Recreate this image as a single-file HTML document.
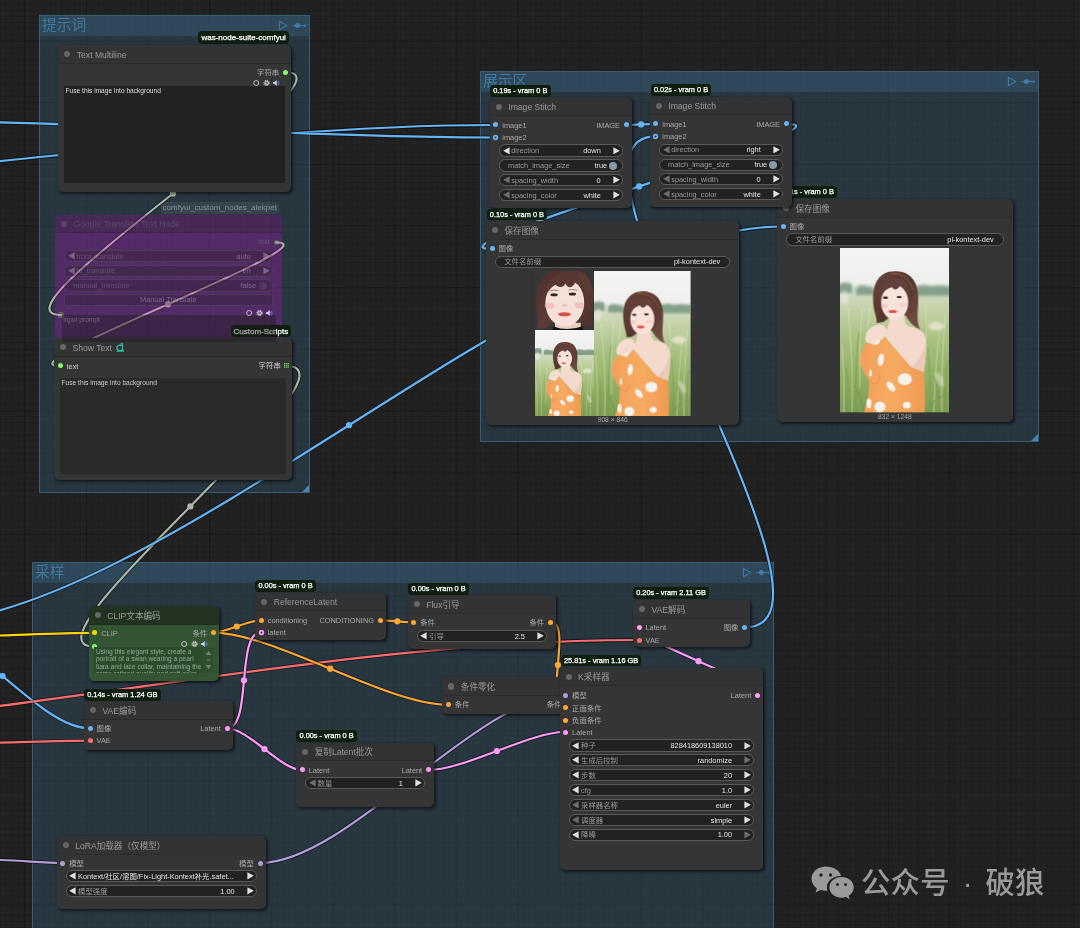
<!DOCTYPE html>
<html lang="zh"><head><meta charset="utf-8"><title>ComfyUI</title>
<style>
*{box-sizing:border-box}
html,body{margin:0;padding:0;background:#202020}
body{width:1080px;height:928px;overflow:hidden;font-family:"Liberation Sans","Noto Sans CJK SC",sans-serif}
#cv{will-change:transform;position:relative;width:1080px;height:928px;overflow:hidden;background-color:#222;
background-image:
 linear-gradient(to right,rgba(0,0,0,.19) 1px,transparent 1px),
 linear-gradient(to bottom,rgba(0,0,0,.19) 1px,transparent 1px),
 linear-gradient(to right,rgba(0,0,0,.115) 1px,transparent 1px),
 linear-gradient(to bottom,rgba(0,0,0,.115) 1px,transparent 1px);
background-size:61.7px 61.7px,61.7px 61.7px,6.17px 6.17px,6.17px 6.17px;
background-position:24.4px 40.6px,24.4px 40.6px,24.4px 40.6px,24.4px 40.6px}
.a{position:absolute}
svg{display:block}
.grp{position:absolute;background:rgba(63,120,158,.25);border:1px solid rgba(63,120,158,.62)}
.grp .hd{position:absolute;left:0;top:0;right:0;height:20.2px;background:rgba(63,120,158,.28)}
.grp .tt{position:absolute;left:2px;top:-1px;font-size:14.8px;line-height:21px;color:rgba(66,126,168,.92);white-space:nowrap}
.nd{position:absolute;background:#353535;border-radius:5px;box-shadow:1.5px 1.5px 3px rgba(0,0,0,.55)}
.nd .th{position:absolute;left:0;top:0;right:0;height:18.5px;background:#333;border-radius:5px 5px 0 0;border-bottom:1px solid #2b2b2b}
.nd .dot{position:absolute;left:6px;top:6.2px;width:6.2px;height:6.2px;border-radius:50%;background:#666}
.nd .tt{position:absolute;left:18.5px;top:.6px;height:18.5px;line-height:18.5px;font-size:8.6px;color:#9a9a9a;white-space:nowrap}
.sl{position:absolute;font-size:7.4px;line-height:10px;height:10px;color:#aaa;white-space:nowrap}
.sd{position:absolute;width:5.2px;height:5.2px;border-radius:50%}
.sh{position:absolute;width:5.6px;height:5.6px;border-radius:50%;background:#2a2a2a;border:1.9px solid}
.wg{position:absolute;height:12.4px;border-radius:6.2px;background:#222;border:1px solid #5a5a5a;font-size:7.4px;line-height:10.6px;white-space:nowrap}
.wg .l{position:absolute;left:11.4px;top:.9px;color:#999}
.wg .l2{position:absolute;left:8.2px;top:.9px;color:#999}
.wg .v{position:absolute;right:21px;top:.9px;color:#e2e2e2}
.wg .v2{position:absolute;right:9px;top:.9px;color:#e2e2e2}
.wg .al{position:absolute;left:2.8px;top:1.4px;fill:#e0e0e0}
.wg .ar{position:absolute;right:2.1px;top:1.4px;fill:#e0e0e0}
.wg .dim{opacity:.4}
.wg .tg{position:absolute;right:4.4px;top:1.4px;width:8.4px;height:8.4px;border-radius:50%;background:#8899aa}
.bdg{position:absolute;height:11.6px;border-radius:3.5px;background:#0f1f0f;color:#fff;font-size:7.4px;line-height:12.2px;padding:0 3.2px;white-space:nowrap;-webkit-text-stroke:.25px #fff}
.ta{position:absolute;background:#222;color:#ddd;font-size:6.6px;line-height:7.4px;padding:.5px 1.6px;overflow:hidden;white-space:nowrap}
.cap{position:absolute;font-size:6.7px;line-height:8px;color:#a8a8a8;text-align:center;white-space:nowrap}
</style></head>
<body><div id="cv">
<div class="grp" style="left:39px;top:15px;width:271px;height:478px"><div class="hd"></div><div class="tt">提示词</div><svg class="a" style="right:2px;top:3.6px" width="32" height="12" viewBox="0 0 32 12"><path d="M4.4 1.2 L11.8 5.5 L4.4 9.8 Z" fill="none" stroke="#3d759e" stroke-width="1.2" stroke-linejoin="round"/><path d="M17.4 5.6 H30" stroke="#417daa" stroke-width="1"/><circle cx="22.4" cy="5.6" r="2.5" fill="#417daa"/><path d="M29 3.9 L31.2 5.6 L29 7.3 Z" fill="#417daa"/></svg><svg class="a" style="right:0;bottom:0" width="7" height="7"><path d="M7 0 V7 H0 Z" fill="rgba(74,143,196,.9)"/></svg></div>
<div class="grp" style="left:480px;top:71px;width:559px;height:371px"><div class="hd"></div><div class="tt">展示区</div><svg class="a" style="right:2px;top:3.6px" width="32" height="12" viewBox="0 0 32 12"><path d="M4.4 1.2 L11.8 5.5 L4.4 9.8 Z" fill="none" stroke="#3d759e" stroke-width="1.2" stroke-linejoin="round"/><path d="M17.4 5.6 H30" stroke="#417daa" stroke-width="1"/><circle cx="22.4" cy="5.6" r="2.5" fill="#417daa"/><path d="M29 3.9 L31.2 5.6 L29 7.3 Z" fill="#417daa"/></svg><svg class="a" style="right:0;bottom:0" width="7" height="7"><path d="M7 0 V7 H0 Z" fill="rgba(74,143,196,.9)"/></svg></div>
<div class="grp" style="left:32px;top:562px;width:742.3px;height:400px"><div class="hd"></div><div class="tt">采样</div><svg class="a" style="right:2px;top:3.6px" width="32" height="12" viewBox="0 0 32 12"><path d="M4.4 1.2 L11.8 5.5 L4.4 9.8 Z" fill="none" stroke="#3d759e" stroke-width="1.2" stroke-linejoin="round"/><path d="M17.4 5.6 H30" stroke="#417daa" stroke-width="1"/><circle cx="22.4" cy="5.6" r="2.5" fill="#417daa"/><path d="M29 3.9 L31.2 5.6 L29 7.3 Z" fill="#417daa"/></svg><svg class="a" style="right:0;bottom:0" width="7" height="7"><path d="M7 0 V7 H0 Z" fill="rgba(74,143,196,.9)"/></svg></div>
<svg class="a" style="left:0;top:0" width="1080" height="928" viewBox="0 0 1080 928" fill="none" stroke-linecap="round"><path d="M285.0 72.0 C367.6 72.0 -21.6 315.0 61.0 315.0" stroke="rgba(0,0,0,.55)" stroke-width="3.8"/><path d="M285.0 72.0 C367.6 72.0 -21.6 315.0 61.0 315.0" stroke="#a9b8a6" stroke-width="2.2"/><path d="M276.0 242.4 C338.2 242.4 -2.2 366.0 60.0 366.0" stroke="rgba(0,0,0,.55)" stroke-width="3.8"/><path d="M276.0 242.4 C338.2 242.4 -2.2 366.0 60.0 366.0" stroke="#a9b8a6" stroke-width="2.2"/><path d="M286.5 366.0 C371.5 366.0 9.3 646.7 94.3 646.7" stroke="rgba(0,0,0,.55)" stroke-width="3.8"/><path d="M286.5 366.0 C371.5 366.0 9.3 646.7 94.3 646.7" stroke="#a9b8a6" stroke-width="2.2"/><path d="M-84.0 624.0 C154.2 624.0 543.8 226.5 782.0 226.5" stroke="rgba(0,0,0,.55)" stroke-width="3.8"/><path d="M-84.0 624.0 C154.2 624.0 543.8 226.5 782.0 226.5" stroke="#64b5f6" stroke-width="2.2"/><path d="M-84.0 624.0 C-33.4 624.0 38.7 728.3 89.3 728.3" stroke="rgba(0,0,0,.55)" stroke-width="3.8"/><path d="M-84.0 624.0 C-33.4 624.0 38.7 728.3 89.3 728.3" stroke="#64b5f6" stroke-width="2.2"/><path d="M-10 162.2 C158.7 145 327.3 125 496 125" stroke="rgba(0,0,0,.55)" stroke-width="3.8"/><path d="M-10 162.2 C158.7 145 327.3 125 496 125" stroke="#64b5f6" stroke-width="2.2"/><path d="M-10 122.2 C158.7 126 327.3 137.5 496 137.5" stroke="rgba(0,0,0,.55)" stroke-width="3.8"/><path d="M-10 122.2 C158.7 126 327.3 137.5 496 137.5" stroke="#64b5f6" stroke-width="2.2"/><path d="M626.3 125.0 C633.7 125.0 648.6 123.8 656.0 123.8" stroke="rgba(0,0,0,.55)" stroke-width="3.8"/><path d="M626.3 125.0 C633.7 125.0 648.6 123.8 656.0 123.8" stroke="#64b5f6" stroke-width="2.2"/><path d="M786.5 123.8 C866.5 123.8 412.0 249.0 492.0 249.0" stroke="rgba(0,0,0,.55)" stroke-width="3.8"/><path d="M786.5 123.8 C866.5 123.8 412.0 249.0 492.0 249.0" stroke="#64b5f6" stroke-width="2.2"/><path d="M745.0 627.2 C869.7 627.2 531.3 136.3 656.0 136.3" stroke="rgba(0,0,0,.55)" stroke-width="3.8"/><path d="M745.0 627.2 C869.7 627.2 531.3 136.3 656.0 136.3" stroke="#64b5f6" stroke-width="2.2"/><path d="M-10 635.8 C30 634.6 60 632.9 94.7 632.9" stroke="rgba(0,0,0,.55)" stroke-width="3.8"/><path d="M-10 635.8 C30 634.6 60 632.9 94.7 632.9" stroke="#ffd500" stroke-width="2.2"/><path d="M-10 742.9 C30 742 60 740.7 89.3 740.7" stroke="rgba(0,0,0,.55)" stroke-width="3.8"/><path d="M-10 742.9 C30 742 60 740.7 89.3 740.7" stroke="#ff6e6e" stroke-width="2.2"/><path d="M-10 707.2 C206.3 679.5 422.7 640 639 640" stroke="rgba(0,0,0,.55)" stroke-width="3.8"/><path d="M-10 707.2 C206.3 679.5 422.7 640 639 640" stroke="#ff6e6e" stroke-width="2.2"/><path d="M212.7 632.7 C225.2 632.7 248.5 620.3 261.0 620.3" stroke="rgba(0,0,0,.55)" stroke-width="3.8"/><path d="M212.7 632.7 C225.2 632.7 248.5 620.3 261.0 620.3" stroke="#ffa931" stroke-width="2.2"/><path d="M212.7 632.7 C274.1 632.7 386.3 704.7 447.7 704.7" stroke="rgba(0,0,0,.55)" stroke-width="3.8"/><path d="M212.7 632.7 C274.1 632.7 386.3 704.7 447.7 704.7" stroke="#ffa931" stroke-width="2.2"/><path d="M381.0 620.3 C389.2 620.3 405.5 622.3 413.7 622.3" stroke="rgba(0,0,0,.55)" stroke-width="3.8"/><path d="M381.0 620.3 C389.2 620.3 405.5 622.3 413.7 622.3" stroke="#ffa931" stroke-width="2.2"/><path d="M551.0 622.3 C572.7 622.3 543.0 708.0 564.7 708.0" stroke="rgba(0,0,0,.55)" stroke-width="3.8"/><path d="M551.0 622.3 C572.7 622.3 543.0 708.0 564.7 708.0" stroke="#ffa931" stroke-width="2.2"/><path d="M227.0 728.3 C252.5 728.3 235.5 632.3 261.0 632.3" stroke="rgba(0,0,0,.55)" stroke-width="3.8"/><path d="M227.0 728.3 C252.5 728.3 235.5 632.3 261.0 632.3" stroke="#ff9cf9" stroke-width="2.2"/><path d="M227.0 728.3 C248.5 728.3 280.5 770.0 302.0 770.0" stroke="rgba(0,0,0,.55)" stroke-width="3.8"/><path d="M227.0 728.3 C248.5 728.3 280.5 770.0 302.0 770.0" stroke="#ff9cf9" stroke-width="2.2"/><path d="M429.0 770.0 C464.2 770.0 529.5 732.0 564.7 732.0" stroke="rgba(0,0,0,.55)" stroke-width="3.8"/><path d="M429.0 770.0 C464.2 770.0 529.5 732.0 564.7 732.0" stroke="#ff9cf9" stroke-width="2.2"/><path d="M758.0 695.2 C792.3 695.2 604.7 627.2 639.0 627.2" stroke="rgba(0,0,0,.55)" stroke-width="3.8"/><path d="M758.0 695.2 C792.3 695.2 604.7 627.2 639.0 627.2" stroke="#ff9cf9" stroke-width="2.2"/><path d="M-10 859.8 C20 860 40 863 62.3 863" stroke="rgba(0,0,0,.55)" stroke-width="3.8"/><path d="M-10 859.8 C20 860 40 863 62.3 863" stroke="#b39ddb" stroke-width="2.2"/><path d="M260.0 863.0 C347.0 863.0 477.7 695.2 564.7 695.2" stroke="rgba(0,0,0,.55)" stroke-width="3.8"/><path d="M260.0 863.0 C347.0 863.0 477.7 695.2 564.7 695.2" stroke="#b39ddb" stroke-width="2.2"/><circle cx="173.0" cy="193.5" r="3.1" fill="#a9b8a6" stroke="none"/><circle cx="168.0" cy="304.2" r="3.1" fill="#a9b8a6" stroke="none"/><circle cx="190.4" cy="506.4" r="3.1" fill="#a9b8a6" stroke="none"/><circle cx="349.0" cy="425.2" r="3.1" fill="#64b5f6" stroke="none"/><circle cx="2.6" cy="676.1" r="3.1" fill="#64b5f6" stroke="none"/><circle cx="641.1" cy="124.4" r="3.1" fill="#64b5f6" stroke="none"/><circle cx="639.2" cy="186.4" r="3.1" fill="#64b5f6" stroke="none"/><circle cx="700.5" cy="381.8" r="3.1" fill="#64b5f6" stroke="none"/><circle cx="236.8" cy="626.5" r="3.1" fill="#ffa931" stroke="none"/><circle cx="330.2" cy="668.7" r="3.1" fill="#ffa931" stroke="none"/><circle cx="397.3" cy="621.3" r="3.1" fill="#ffa931" stroke="none"/><circle cx="557.9" cy="665.1" r="3.1" fill="#ffa931" stroke="none"/><circle cx="244.0" cy="680.3" r="3.1" fill="#ff9cf9" stroke="none"/><circle cx="264.5" cy="749.1" r="3.1" fill="#ff9cf9" stroke="none"/><circle cx="496.9" cy="751.0" r="3.1" fill="#ff9cf9" stroke="none"/><circle cx="698.5" cy="661.2" r="3.1" fill="#ff9cf9" stroke="none"/><circle cx="412.4" cy="779.1" r="3.1" fill="#b39ddb" stroke="none"/></svg>
<div class="bdg" style="left:198px;top:31.4px;width:91.3px;font-size:8px;height:12.2px;line-height:13.6px;text-align:center;padding:0;border-radius:4px">was-node-suite-comfyui</div>
<div class="nd" style="left:58.3px;top:45px;width:232.7px;height:146.7px;background:#353535;"><div class="th" style="background:#333;border-bottom-color:#2b2b2b"></div><div class="dot" style="background:#666"></div><div class="tt" style="color:#9a9a9a">Text Multiline</div>
<svg class="a" style="right:2.0px;top:23.5px" width="7" height="7"><circle cx="3.5" cy="3.5" r="2.5" fill="#7fff6a"/></svg>
<div class="sl" style="right:11.8px;top:22.8px;color:#aaa">字符串</div>
<div class="a" style="left:195.0px;top:34px"><svg width="27" height="8" viewBox="0 0 27 8"><circle cx="3.2" cy="4" r="2.5" fill="none" stroke="#e6e6e6" stroke-width=".75"/><circle cx="13.6" cy="4" r="2.75" fill="none" stroke="#e4e4e4" stroke-width=".9" stroke-dasharray="1.15 1.01"/><circle cx="13.6" cy="4" r="1.75" fill="none" stroke="#ececec" stroke-width="1"/><circle cx="13.6" cy="4" r=".55" fill="#ececec"/><path d="M20.2 2.9 H21.6 L23.7 1 V7 L21.6 5.1 H20.2 Z" fill="#d9d2e8"/><path d="M24.5 2.6 Q25.5 4 24.5 5.4 M25.4 1.7 Q27 4 25.4 6.3" stroke="#4f86e8" stroke-width=".8" fill="none"/></svg></div>
<div class="ta" style="left:5.7px;top:41px;width:221px;height:96.7px">Fuse this image into background</div>
</div>
<div class="a" style="left:0;top:0">
<div class="bdg" style="left:160.5px;top:202.2px;width:118.5px;font-size:8px;height:11.6px;line-height:12.8px;text-align:center;padding:0;border-radius:4px;background:rgba(255,255,255,.065);color:#84949f;-webkit-text-stroke:0">comfyui_custom_nodes_alekpet</div>
</div>
<div class="nd" style="left:55px;top:214.5px;width:226.7px;height:131px;background:rgba(255,0,255,.2);box-shadow:none"><div class="th" style="background:rgba(40,30,40,.25);border-bottom-color:rgba(0,0,0,.12)"></div><div class="a" style="left:0;top:0;right:0;bottom:0;opacity:.3">
<div class="dot" style="background:#888"></div><div class="tt" style="color:#8f8f8f">Google Translate Text Node</div>
<div class="sd" style="right:3px;top:25.3px;background:#7fff6a"></div><div class="sl" style="right:11.9px;top:22.7px">text</div>
<div class="wg" style="left:9px;right:9px;top:35.3px"><svg class="al" width="7" height="7.6" viewBox="0 0 7 7.6"><path d="M6.6 .2 V7.4 L.2 3.8 Z"/></svg><span class="l">from_translate</span><span class="v">auto</span><svg class="ar" width="7" height="7.6" viewBox="0 0 7 7.6"><path d="M.4 .2 V7.4 L6.8 3.8 Z"/></svg></div>
<div class="wg" style="left:9px;right:9px;top:50.0px"><svg class="al" width="7" height="7.6" viewBox="0 0 7 7.6"><path d="M6.6 .2 V7.4 L.2 3.8 Z"/></svg><span class="l">to_translate</span><span class="v">en</span><svg class="ar" width="7" height="7.6" viewBox="0 0 7 7.6"><path d="M.4 .2 V7.4 L6.8 3.8 Z"/></svg></div>
<div class="wg" style="left:9px;right:9px;top:64.8px"><span class="l2">manual_translate</span><span class="v" style="right:15.5px">false</span><i class="tg" style="background:#555"></i></div>
<div class="wg" style="left:9px;right:9px;top:79.6px;border-radius:1px;text-align:center;color:#ddd">Manual Translate</div>
<div class="sd" style="left:3.4px;top:97.9px;background:#7fff6a"></div>
</div></div>
<div class="bdg" style="left:231px;top:324.8px;width:59.7px;font-size:8px;height:12.2px;line-height:13.6px;text-align:center;padding:0;border-radius:4px">Custom-Scripts</div>
<div class="nd" style="left:54px;top:338.1px;width:238.4px;height:141.9px;background:#353535;"><div class="th" style="background:#333;border-bottom-color:#2b2b2b"></div><div class="dot" style="background:#666"></div><div class="tt" style="color:#9a9a9a">Show Text <svg style="display:inline;vertical-align:-1.3px;margin-left:.6px" width="9" height="9" viewBox="0 0 10 10"><path d="M7.2 3.2 A3 3 0 1 0 7.2 7.6 L9.4 9.2 M2.2 9 H8.6 M8.4 8.6 V1 H6.4" fill="none" stroke="#2fc0a0" stroke-width="1.3" stroke-linecap="round" stroke-linejoin="round"/></svg></div>
<svg class="a" style="left:2.5px;top:24.4px" width="7" height="7"><circle cx="3.5" cy="3.5" r="2.5" fill="#7fff6a"/></svg>
<div class="sl" style="left:12.5px;top:23.7px;color:#ccc">text</div>
<div class="sl" style="right:11.6px;top:23.2px;color:#ccc">字符串</div>
<svg class="a" style="right:3px;top:24.6px" width="5.6" height="5.6" viewBox="0 0 8 8"><g fill="#6bdc5a"><rect x="0" y="0" width="2" height="2"/><rect x="3" y="0" width="2" height="2"/><rect x="6" y="0" width="2" height="2"/><rect x="0" y="3" width="2" height="2"/><rect x="3" y="3" width="2" height="2"/><rect x="6" y="3" width="2" height="2"/><rect x="0" y="6" width="2" height="2"/><rect x="3" y="6" width="2" height="2"/><rect x="6" y="6" width="2" height="2"/></g></svg>
<div class="ta" style="left:6px;top:40.4px;width:226px;height:95.8px;background:#2a2a2a;color:#ccc">Fuse this image into background</div>
</div>
<div class="ta" style="left:61.6px;top:315px;width:214.1px;height:26.8px;background:rgba(28,28,28,.42);color:rgba(205,195,210,.4)">input prompt</div>
<div class="a" style="left:245.6px;top:309px"><svg width="27" height="8" viewBox="0 0 27 8"><circle cx="3.2" cy="4" r="2.5" fill="none" stroke="#e6e6e6" stroke-width=".75"/><circle cx="13.6" cy="4" r="2.75" fill="none" stroke="#e4e4e4" stroke-width=".9" stroke-dasharray="1.15 1.01"/><circle cx="13.6" cy="4" r="1.75" fill="none" stroke="#ececec" stroke-width="1"/><circle cx="13.6" cy="4" r=".55" fill="#ececec"/><path d="M20.2 2.9 H21.6 L23.7 1 V7 L21.6 5.1 H20.2 Z" fill="#d9d2e8"/><path d="M24.5 2.6 Q25.5 4 24.5 5.4 M25.4 1.7 Q27 4 25.4 6.3" stroke="#4f86e8" stroke-width=".8" fill="none"/></svg></div>
<div class="bdg" style="left:777px;top:186.4px;">0.11s - vram 0 B</div>
<div class="nd" style="left:777px;top:199px;width:235.7px;height:223px;background:#353535;"><div class="th" style="background:#333;border-bottom-color:#2b2b2b"></div><div class="dot" style="background:#666"></div><div class="tt" style="color:#9a9a9a">保存图像</div>
<svg class="a" style="left:2.5px;top:24.0px" width="7" height="7"><circle cx="3.5" cy="3.5" r="2.5" fill="#64b5f6"/></svg>
<div class="sl" style="left:12.5px;top:23.3px;color:#aaa">图像</div>
<div class="wg" style="left:9px;right:9px;top:34.3px"><span class="l2">文件名前缀</span><span class="v2">pl-kontext-dev</span></div>
<svg class="a" style="left:63px;top:49.400000000000006px" width="109.3" height="164.3" viewBox="0 0 548 824" preserveAspectRatio="none">
<defs><linearGradient id="gr4" x1="0" y1="0" x2="0" y2="1"><stop offset="0" stop-color="#f4f4f3"/><stop offset=".21" stop-color="#eff0ee"/><stop offset=".27" stop-color="#d3dbc9"/><stop offset=".34" stop-color="#c9d5ae"/><stop offset=".55" stop-color="#a9c182"/><stop offset=".8" stop-color="#8fae62"/><stop offset="1" stop-color="#7d9c54"/></linearGradient>
<linearGradient id="hr4" x1="0" y1="0" x2="1" y2="1"><stop offset="0" stop-color="#6a443a"/><stop offset=".5" stop-color="#55362f"/><stop offset="1" stop-color="#7a5246"/></linearGradient>
<linearGradient id="dr4" x1="0" y1="0" x2="1" y2="0"><stop offset="0" stop-color="#f2a05a"/><stop offset=".5" stop-color="#f7ab62"/><stop offset="1" stop-color="#f09a52"/></linearGradient>
<filter id="bl4" x="-10%" y="-10%" width="120%" height="120%"><feGaussianBlur stdDeviation="7"/></filter><filter id="bs4"><feGaussianBlur stdDeviation="2.5"/></filter></defs>
<rect width="548" height="824" fill="url(#gr4)"/>
<g filter="url(#bl4)"><path d="M-10 182 Q25 166 58 180 Q64 200 60 226 L-10 230 Z M80 200 Q110 178 136 194 Q162 186 172 214 L172 236 L80 236 Z M370 198 Q410 176 452 192 Q500 184 560 194 L560 240 L370 240 Z" fill="#76947c" opacity=".85"/>
<ellipse cx="482" cy="392" rx="40" ry="22" fill="#ece9d6" opacity=".8"/><ellipse cx="22" cy="250" rx="22" ry="34" fill="#e8eadb" opacity=".7"/><ellipse cx="500" cy="660" rx="16" ry="40" fill="#dfe0c4" opacity=".6" transform="rotate(-25 500 660)"/></g>
<g filter="url(#bs4)" fill="none"><g stroke="#e2e9d2" stroke-width="5" opacity=".55"><path d="M60 824 Q70 600 40 300"/><path d="M470 824 Q480 560 500 400"/><path d="M510 824 Q505 600 530 330"/><path d="M20 824 Q25 650 10 480"/><path d="M100 700 Q95 500 110 300"/><path d="M140 560 Q130 420 150 300"/><path d="M430 500 Q440 400 425 300"/></g>
<g stroke="#6f9548" stroke-width="6" opacity=".5"><path d="M80 824 Q75 600 95 420"/><path d="M450 824 Q455 650 440 500"/><path d="M530 824 Q520 700 540 560"/><path d="M35 824 Q45 700 30 600"/><path d="M490 824 Q500 720 470 640"/><path d="M118 824 Q110 740 70 690"/><path d="M420 824 Q470 760 540 730"/></g></g>
<path d="M280 116 C190 112 160 190 166 270 C168 320 190 360 182 374 C215 380 240 360 250 340 L330 340 C350 380 380 400 402 410 C380 360 392 320 392 262 C396 180 360 116 280 116 Z" fill="url(#hr4)"/>
<path d="M240 388 C250 370 250 350 248 330 L322 330 C322 360 326 380 340 392 C380 400 420 410 428 450 C436 500 430 560 420 626 L356 600 L225 445 Z" fill="#f3dacd"/>
<path d="M356 600 L420 626 C428 570 432 520 430 470 C420 520 400 560 356 600 Z" fill="#e6c3b2" opacity=".7"/>
<ellipse cx="274" cy="272" rx="68" ry="88" fill="#f7e3da"/>
<path d="M204 250 C196 180 240 150 290 152 C340 154 356 200 348 250 C340 215 320 196 300 190 C290 210 270 214 262 196 C240 200 215 215 204 250 Z" fill="#63413a"/>
<path d="M250 130 C300 120 350 150 366 210" stroke="#8a5a48" stroke-width="10" fill="none" opacity=".55" filter="url(#bs4)"/>
<ellipse cx="228" cy="249" rx="13" ry="6" fill="#3a2624"/><ellipse cx="297" cy="246" rx="13" ry="6" fill="#3a2624"/>
<ellipse cx="265" cy="318" rx="21" ry="8" fill="#e2504a"/>
<ellipse cx="222" cy="290" rx="16" ry="11" fill="#f3c2b8" opacity=".6"/><ellipse cx="314" cy="286" rx="16" ry="11" fill="#f3c2b8" opacity=".6"/>
<path d="M220 443 L356 598 L420 623 C428 690 426 760 425 824 L120 824 C135 770 150 720 145 660 C120 630 100 590 100 558 C104 530 112 505 122 486 L166 462 Z" fill="url(#dr4)"/>
<path d="M145 660 C170 690 190 690 200 650" stroke="#e08a44" stroke-width="6" fill="none" opacity=".6" filter="url(#bs4)"/>
<path d="M128 470 C120 430 150 390 190 384 C220 380 236 400 232 424 C228 450 200 470 170 486 Z" fill="#f4dccf"/>
<g fill="#f6f2ec"><ellipse cx="205" cy="560" rx="15" ry="32" transform="rotate(8 205 560)"/><ellipse cx="325" cy="658" rx="35" ry="30"/><ellipse cx="255" cy="695" rx="16" ry="30" transform="rotate(-38 255 695)"/><ellipse cx="200" cy="797" rx="28" ry="27"/><ellipse cx="145" cy="780" rx="12" ry="25"/><ellipse cx="335" cy="788" rx="20" ry="17"/><ellipse cx="186" cy="474" rx="15" ry="9" transform="rotate(-40 186 474)"/><ellipse cx="153" cy="628" rx="6" ry="19"/></g>
</svg>
<div class="cap" style="left:0;right:0;top:213.8px">832 × 1248</div>
</div>
<div class="bdg" style="left:490px;top:85.3px;">0.19s - vram 0 B</div>
<div class="nd" style="left:489.8px;top:97.6px;width:142px;height:110.2px;background:#353535;"><div class="th" style="background:#333;border-bottom-color:#2b2b2b"></div><div class="dot" style="background:#666"></div><div class="tt" style="color:#9a9a9a">Image Stitch</div>
<svg class="a" style="left:2.5px;top:23.9px" width="7" height="7"><circle cx="3.5" cy="3.5" r="2.5" fill="#64b5f6"/></svg>
<div class="sl" style="left:12.5px;top:23.2px;color:#aaa">image1</div>
<svg class="a" style="left:2.5px;top:36.6px" width="7" height="7"><circle cx="3.5" cy="3.5" r="1.85" fill="none" stroke="#64b5f6" stroke-width="1.7"/></svg>
<div class="sl" style="left:12.5px;top:35.9px;color:#aaa">image2</div>
<svg class="a" style="right:2.0px;top:23.9px" width="7" height="7"><circle cx="3.5" cy="3.5" r="2.5" fill="#64b5f6"/></svg>
<div class="sl" style="right:11.8px;top:23.2px;color:#aaa">IMAGE</div>
<div class="wg" style="left:9px;right:9px;top:46.9px"><svg class="al" width="7" height="7.6" viewBox="0 0 7 7.6"><path d="M6.6 .2 V7.4 L.2 3.8 Z"/></svg><span class="l">direction</span><span class="v" style="right:21px">down</span><svg class="ar" width="7" height="7.6" viewBox="0 0 7 7.6"><path d="M.4 .2 V7.4 L6.8 3.8 Z"/></svg></div>
<div class="wg" style="left:9px;right:9px;top:61.9px"><span class="l2">match_image_size</span><span class="v" style="right:14.6px">true</span><i class="tg"></i></div>
<div class="wg" style="left:9px;right:9px;top:76.5px"><svg class="al dim" width="7" height="7.6" viewBox="0 0 7 7.6"><path d="M6.6 .2 V7.4 L.2 3.8 Z"/></svg><span class="l">spacing_width</span><span class="v" style="right:21.3px">0</span><svg class="ar" width="7" height="7.6" viewBox="0 0 7 7.6"><path d="M.4 .2 V7.4 L6.8 3.8 Z"/></svg></div>
<div class="wg" style="left:9px;right:9px;top:91.2px"><svg class="al dim" width="7" height="7.6" viewBox="0 0 7 7.6"><path d="M6.6 .2 V7.4 L.2 3.8 Z"/></svg><span class="l">spacing_color</span><span class="v" style="right:21px">white</span><svg class="ar" width="7" height="7.6" viewBox="0 0 7 7.6"><path d="M.4 .2 V7.4 L6.8 3.8 Z"/></svg></div>
</div>
<div class="bdg" style="left:650.7px;top:84.4px;">0.02s - vram 0 B</div>
<div class="nd" style="left:649.8px;top:96.5px;width:142px;height:110.8px;background:#353535;"><div class="th" style="background:#333;border-bottom-color:#2b2b2b"></div><div class="dot" style="background:#666"></div><div class="tt" style="color:#9a9a9a">Image Stitch</div>
<svg class="a" style="left:2.5px;top:23.8px" width="7" height="7"><circle cx="3.5" cy="3.5" r="2.5" fill="#64b5f6"/></svg>
<div class="sl" style="left:12.5px;top:23.1px;color:#aaa">image1</div>
<svg class="a" style="left:2.5px;top:36.3px" width="7" height="7"><circle cx="3.5" cy="3.5" r="1.85" fill="none" stroke="#64b5f6" stroke-width="1.7"/></svg>
<div class="sl" style="left:12.5px;top:35.6px;color:#aaa">image2</div>
<svg class="a" style="right:2.0px;top:23.8px" width="7" height="7"><circle cx="3.5" cy="3.5" r="2.5" fill="#64b5f6"/></svg>
<div class="sl" style="right:11.8px;top:23.1px;color:#aaa">IMAGE</div>
<div class="wg" style="left:9px;right:9px;top:47.0px"><svg class="al dim" width="7" height="7.6" viewBox="0 0 7 7.6"><path d="M6.6 .2 V7.4 L.2 3.8 Z"/></svg><span class="l">direction</span><span class="v" style="right:21px">right</span><svg class="ar" width="7" height="7.6" viewBox="0 0 7 7.6"><path d="M.4 .2 V7.4 L6.8 3.8 Z"/></svg></div>
<div class="wg" style="left:9px;right:9px;top:62.0px"><span class="l2">match_image_size</span><span class="v" style="right:14.6px">true</span><i class="tg"></i></div>
<div class="wg" style="left:9px;right:9px;top:76.6px"><svg class="al dim" width="7" height="7.6" viewBox="0 0 7 7.6"><path d="M6.6 .2 V7.4 L.2 3.8 Z"/></svg><span class="l">spacing_width</span><span class="v" style="right:21.3px">0</span><svg class="ar" width="7" height="7.6" viewBox="0 0 7 7.6"><path d="M.4 .2 V7.4 L6.8 3.8 Z"/></svg></div>
<div class="wg" style="left:9px;right:9px;top:91.6px"><svg class="al dim" width="7" height="7.6" viewBox="0 0 7 7.6"><path d="M6.6 .2 V7.4 L.2 3.8 Z"/></svg><span class="l">spacing_color</span><span class="v" style="right:21px">white</span><svg class="ar" width="7" height="7.6" viewBox="0 0 7 7.6"><path d="M.4 .2 V7.4 L6.8 3.8 Z"/></svg></div>
</div>
<div class="bdg" style="left:486.6px;top:208.6px;">0.10s - vram 0 B</div>
<div class="nd" style="left:486px;top:221px;width:253.3px;height:204px;background:#353535;"><div class="th" style="background:#333;border-bottom-color:#2b2b2b"></div><div class="dot" style="background:#666"></div><div class="tt" style="color:#9a9a9a">保存图像</div>
<svg class="a" style="left:2.5px;top:24.0px" width="7" height="7"><circle cx="3.5" cy="3.5" r="2.5" fill="#64b5f6"/></svg>
<div class="sl" style="left:12.5px;top:23.3px;color:#aaa">图像</div>
<div class="wg" style="left:9px;right:9px;top:34.6px"><span class="l2">文件名前缀</span><span class="v2">pl-kontext-dev</span></div>
<svg class="a" style="left:49.200000000000045px;top:49.80000000000001px" width="58.9" height="59" viewBox="0 0 340 342" preserveAspectRatio="none">
<defs><filter id="fb1"><feGaussianBlur stdDeviation="4"/></filter><linearGradient id="fh1" x1="0" y1="0" x2="1" y2="1"><stop offset="0" stop-color="#4a2f2b"/><stop offset=".5" stop-color="#5e3c35"/><stop offset="1" stop-color="#4c312c"/></linearGradient></defs>
<rect width="340" height="342" fill="#373737"/>
<path d="M84 0 C30 30 2 110 6 200 C10 260 28 300 14 332 C50 338 92 322 106 290 L248 290 C262 318 300 326 334 314 C322 270 338 220 338 170 C340 90 312 24 262 0 Z" fill="url(#fh1)"/>
<path d="M116 300 L116 342 L264 342 L264 300 Z" fill="#eacdc1"/>
<path d="M106 322 Q190 352 274 320 L280 342 L100 342 Z" fill="#141414"/>
<ellipse cx="172" cy="182" rx="112" ry="140" fill="#f5e0d8"/>
<path d="M58 170 C48 70 90 22 170 20 C260 18 302 72 292 168 C282 112 258 82 232 68 C216 100 190 104 176 72 C160 104 130 94 120 80 C90 94 66 124 58 170 Z" fill="#583832"/>
<ellipse cx="110" cy="138" rx="21" ry="9" fill="#3a2422"/><ellipse cx="216" cy="133" rx="21" ry="9" fill="#3a2422"/>
<path d="M84 116 Q110 106 134 114 M194 110 Q218 102 244 112" stroke="#6a4a40" stroke-width="5" fill="none" opacity=".7"/>
<ellipse cx="170" cy="198" rx="15" ry="9" fill="#ebc6ba"/>
<ellipse cx="170" cy="251" rx="37" ry="12" fill="#d9504c"/>
<g filter="url(#fb1)"><ellipse cx="84" cy="202" rx="28" ry="18" fill="#f2b8b0" opacity=".7"/><ellipse cx="256" cy="198" rx="28" ry="18" fill="#f2b8b0" opacity=".7"/></g>
</svg><svg class="a" style="left:48.700000000000045px;top:108.89999999999998px" width="59.4" height="86.1" viewBox="0 0 548 824" preserveAspectRatio="none">
<defs><linearGradient id="gr2" x1="0" y1="0" x2="0" y2="1"><stop offset="0" stop-color="#f4f4f3"/><stop offset=".21" stop-color="#eff0ee"/><stop offset=".27" stop-color="#d3dbc9"/><stop offset=".34" stop-color="#c9d5ae"/><stop offset=".55" stop-color="#a9c182"/><stop offset=".8" stop-color="#8fae62"/><stop offset="1" stop-color="#7d9c54"/></linearGradient>
<linearGradient id="hr2" x1="0" y1="0" x2="1" y2="1"><stop offset="0" stop-color="#6a443a"/><stop offset=".5" stop-color="#55362f"/><stop offset="1" stop-color="#7a5246"/></linearGradient>
<linearGradient id="dr2" x1="0" y1="0" x2="1" y2="0"><stop offset="0" stop-color="#f2a05a"/><stop offset=".5" stop-color="#f7ab62"/><stop offset="1" stop-color="#f09a52"/></linearGradient>
<filter id="bl2" x="-10%" y="-10%" width="120%" height="120%"><feGaussianBlur stdDeviation="7"/></filter><filter id="bs2"><feGaussianBlur stdDeviation="2.5"/></filter></defs>
<rect width="548" height="824" fill="url(#gr2)"/>
<g filter="url(#bl2)"><path d="M-10 182 Q25 166 58 180 Q64 200 60 226 L-10 230 Z M80 200 Q110 178 136 194 Q162 186 172 214 L172 236 L80 236 Z M370 198 Q410 176 452 192 Q500 184 560 194 L560 240 L370 240 Z" fill="#76947c" opacity=".85"/>
<ellipse cx="482" cy="392" rx="40" ry="22" fill="#ece9d6" opacity=".8"/><ellipse cx="22" cy="250" rx="22" ry="34" fill="#e8eadb" opacity=".7"/><ellipse cx="500" cy="660" rx="16" ry="40" fill="#dfe0c4" opacity=".6" transform="rotate(-25 500 660)"/></g>
<g filter="url(#bs2)" fill="none"><g stroke="#e2e9d2" stroke-width="5" opacity=".55"><path d="M60 824 Q70 600 40 300"/><path d="M470 824 Q480 560 500 400"/><path d="M510 824 Q505 600 530 330"/><path d="M20 824 Q25 650 10 480"/><path d="M100 700 Q95 500 110 300"/><path d="M140 560 Q130 420 150 300"/><path d="M430 500 Q440 400 425 300"/></g>
<g stroke="#6f9548" stroke-width="6" opacity=".5"><path d="M80 824 Q75 600 95 420"/><path d="M450 824 Q455 650 440 500"/><path d="M530 824 Q520 700 540 560"/><path d="M35 824 Q45 700 30 600"/><path d="M490 824 Q500 720 470 640"/><path d="M118 824 Q110 740 70 690"/><path d="M420 824 Q470 760 540 730"/></g></g>
<path d="M280 116 C190 112 160 190 166 270 C168 320 190 360 182 374 C215 380 240 360 250 340 L330 340 C350 380 380 400 402 410 C380 360 392 320 392 262 C396 180 360 116 280 116 Z" fill="url(#hr2)"/>
<path d="M240 388 C250 370 250 350 248 330 L322 330 C322 360 326 380 340 392 C380 400 420 410 428 450 C436 500 430 560 420 626 L356 600 L225 445 Z" fill="#f3dacd"/>
<path d="M356 600 L420 626 C428 570 432 520 430 470 C420 520 400 560 356 600 Z" fill="#e6c3b2" opacity=".7"/>
<ellipse cx="274" cy="272" rx="68" ry="88" fill="#f7e3da"/>
<path d="M204 250 C196 180 240 150 290 152 C340 154 356 200 348 250 C340 215 320 196 300 190 C290 210 270 214 262 196 C240 200 215 215 204 250 Z" fill="#63413a"/>
<path d="M250 130 C300 120 350 150 366 210" stroke="#8a5a48" stroke-width="10" fill="none" opacity=".55" filter="url(#bs2)"/>
<ellipse cx="228" cy="249" rx="13" ry="6" fill="#3a2624"/><ellipse cx="297" cy="246" rx="13" ry="6" fill="#3a2624"/>
<ellipse cx="265" cy="318" rx="21" ry="8" fill="#e2504a"/>
<ellipse cx="222" cy="290" rx="16" ry="11" fill="#f3c2b8" opacity=".6"/><ellipse cx="314" cy="286" rx="16" ry="11" fill="#f3c2b8" opacity=".6"/>
<path d="M220 443 L356 598 L420 623 C428 690 426 760 425 824 L120 824 C135 770 150 720 145 660 C120 630 100 590 100 558 C104 530 112 505 122 486 L166 462 Z" fill="url(#dr2)"/>
<path d="M145 660 C170 690 190 690 200 650" stroke="#e08a44" stroke-width="6" fill="none" opacity=".6" filter="url(#bs2)"/>
<path d="M128 470 C120 430 150 390 190 384 C220 380 236 400 232 424 C228 450 200 470 170 486 Z" fill="#f4dccf"/>
<g fill="#f6f2ec"><ellipse cx="205" cy="560" rx="15" ry="32" transform="rotate(8 205 560)"/><ellipse cx="325" cy="658" rx="35" ry="30"/><ellipse cx="255" cy="695" rx="16" ry="30" transform="rotate(-38 255 695)"/><ellipse cx="200" cy="797" rx="28" ry="27"/><ellipse cx="145" cy="780" rx="12" ry="25"/><ellipse cx="335" cy="788" rx="20" ry="17"/><ellipse cx="186" cy="474" rx="15" ry="9" transform="rotate(-40 186 474)"/><ellipse cx="153" cy="628" rx="6" ry="19"/></g>
</svg><svg class="a" style="left:108.10000000000002px;top:49.80000000000001px" width="96.6" height="145.2" viewBox="0 0 548 824" preserveAspectRatio="none">
<defs><linearGradient id="gr3" x1="0" y1="0" x2="0" y2="1"><stop offset="0" stop-color="#f4f4f3"/><stop offset=".21" stop-color="#eff0ee"/><stop offset=".27" stop-color="#d3dbc9"/><stop offset=".34" stop-color="#c9d5ae"/><stop offset=".55" stop-color="#a9c182"/><stop offset=".8" stop-color="#8fae62"/><stop offset="1" stop-color="#7d9c54"/></linearGradient>
<linearGradient id="hr3" x1="0" y1="0" x2="1" y2="1"><stop offset="0" stop-color="#6a443a"/><stop offset=".5" stop-color="#55362f"/><stop offset="1" stop-color="#7a5246"/></linearGradient>
<linearGradient id="dr3" x1="0" y1="0" x2="1" y2="0"><stop offset="0" stop-color="#f2a05a"/><stop offset=".5" stop-color="#f7ab62"/><stop offset="1" stop-color="#f09a52"/></linearGradient>
<filter id="bl3" x="-10%" y="-10%" width="120%" height="120%"><feGaussianBlur stdDeviation="7"/></filter><filter id="bs3"><feGaussianBlur stdDeviation="2.5"/></filter></defs>
<rect width="548" height="824" fill="url(#gr3)"/>
<g filter="url(#bl3)"><path d="M-10 182 Q25 166 58 180 Q64 200 60 226 L-10 230 Z M80 200 Q110 178 136 194 Q162 186 172 214 L172 236 L80 236 Z M370 198 Q410 176 452 192 Q500 184 560 194 L560 240 L370 240 Z" fill="#76947c" opacity=".85"/>
<ellipse cx="482" cy="392" rx="40" ry="22" fill="#ece9d6" opacity=".8"/><ellipse cx="22" cy="250" rx="22" ry="34" fill="#e8eadb" opacity=".7"/><ellipse cx="500" cy="660" rx="16" ry="40" fill="#dfe0c4" opacity=".6" transform="rotate(-25 500 660)"/></g>
<g filter="url(#bs3)" fill="none"><g stroke="#e2e9d2" stroke-width="5" opacity=".55"><path d="M60 824 Q70 600 40 300"/><path d="M470 824 Q480 560 500 400"/><path d="M510 824 Q505 600 530 330"/><path d="M20 824 Q25 650 10 480"/><path d="M100 700 Q95 500 110 300"/><path d="M140 560 Q130 420 150 300"/><path d="M430 500 Q440 400 425 300"/></g>
<g stroke="#6f9548" stroke-width="6" opacity=".5"><path d="M80 824 Q75 600 95 420"/><path d="M450 824 Q455 650 440 500"/><path d="M530 824 Q520 700 540 560"/><path d="M35 824 Q45 700 30 600"/><path d="M490 824 Q500 720 470 640"/><path d="M118 824 Q110 740 70 690"/><path d="M420 824 Q470 760 540 730"/></g></g>
<path d="M280 116 C190 112 160 190 166 270 C168 320 190 360 182 374 C215 380 240 360 250 340 L330 340 C350 380 380 400 402 410 C380 360 392 320 392 262 C396 180 360 116 280 116 Z" fill="url(#hr3)"/>
<path d="M240 388 C250 370 250 350 248 330 L322 330 C322 360 326 380 340 392 C380 400 420 410 428 450 C436 500 430 560 420 626 L356 600 L225 445 Z" fill="#f3dacd"/>
<path d="M356 600 L420 626 C428 570 432 520 430 470 C420 520 400 560 356 600 Z" fill="#e6c3b2" opacity=".7"/>
<ellipse cx="274" cy="272" rx="68" ry="88" fill="#f7e3da"/>
<path d="M204 250 C196 180 240 150 290 152 C340 154 356 200 348 250 C340 215 320 196 300 190 C290 210 270 214 262 196 C240 200 215 215 204 250 Z" fill="#63413a"/>
<path d="M250 130 C300 120 350 150 366 210" stroke="#8a5a48" stroke-width="10" fill="none" opacity=".55" filter="url(#bs3)"/>
<ellipse cx="228" cy="249" rx="13" ry="6" fill="#3a2624"/><ellipse cx="297" cy="246" rx="13" ry="6" fill="#3a2624"/>
<ellipse cx="265" cy="318" rx="21" ry="8" fill="#e2504a"/>
<ellipse cx="222" cy="290" rx="16" ry="11" fill="#f3c2b8" opacity=".6"/><ellipse cx="314" cy="286" rx="16" ry="11" fill="#f3c2b8" opacity=".6"/>
<path d="M220 443 L356 598 L420 623 C428 690 426 760 425 824 L120 824 C135 770 150 720 145 660 C120 630 100 590 100 558 C104 530 112 505 122 486 L166 462 Z" fill="url(#dr3)"/>
<path d="M145 660 C170 690 190 690 200 650" stroke="#e08a44" stroke-width="6" fill="none" opacity=".6" filter="url(#bs3)"/>
<path d="M128 470 C120 430 150 390 190 384 C220 380 236 400 232 424 C228 450 200 470 170 486 Z" fill="#f4dccf"/>
<g fill="#f6f2ec"><ellipse cx="205" cy="560" rx="15" ry="32" transform="rotate(8 205 560)"/><ellipse cx="325" cy="658" rx="35" ry="30"/><ellipse cx="255" cy="695" rx="16" ry="30" transform="rotate(-38 255 695)"/><ellipse cx="200" cy="797" rx="28" ry="27"/><ellipse cx="145" cy="780" rx="12" ry="25"/><ellipse cx="335" cy="788" rx="20" ry="17"/><ellipse cx="186" cy="474" rx="15" ry="9" transform="rotate(-40 186 474)"/><ellipse cx="153" cy="628" rx="6" ry="19"/></g>
</svg>
<div class="cap" style="left:0;right:0;top:195.2px">908 × 846</div>
</div>
<div class="nd" style="left:88.7px;top:606px;width:130.3px;height:75px;background:#335533;"><div class="th" style="background:#223322;border-bottom-color:#1d2c1d"></div><div class="dot" style="background:#666"></div><div class="tt" style="color:#9a9a9a">CLIP文本编码</div>
<svg class="a" style="left:2.5px;top:23.2px" width="7" height="7"><circle cx="3.5" cy="3.5" r="2.5" fill="#ffd500"/></svg>
<div class="sl" style="left:12.5px;top:22.5px;color:#aaa">CLIP</div>
<svg class="a" style="right:2.0px;top:23.2px" width="7" height="7"><circle cx="3.5" cy="3.5" r="2.5" fill="#ffa931"/></svg>
<div class="sl" style="right:11.8px;top:22.5px;color:#aaa">条件</div>
<div class="a" style="left:92.6px;top:33.7px"><svg width="27" height="8" viewBox="0 0 27 8"><circle cx="3.2" cy="4" r="2.5" fill="none" stroke="#e6e6e6" stroke-width=".75"/><circle cx="13.6" cy="4" r="2.75" fill="none" stroke="#e4e4e4" stroke-width=".9" stroke-dasharray="1.15 1.01"/><circle cx="13.6" cy="4" r="1.75" fill="none" stroke="#ececec" stroke-width="1"/><circle cx="13.6" cy="4" r=".55" fill="#ececec"/><path d="M20.2 2.9 H21.6 L23.7 1 V7 L21.6 5.1 H20.2 Z" fill="#d9d2e8"/><path d="M24.5 2.6 Q25.5 4 24.5 5.4 M25.4 1.7 Q27 4 25.4 6.3" stroke="#4f86e8" stroke-width=".8" fill="none"/></svg></div>
<div class="sd" style="left:3px;top:38.1px;background:#7fff6a"></div>
<div class="ta" style="left:5.6px;top:40.7px;width:119px;height:26px;background:#2c4a2c;color:#94ab94;white-space:normal;padding:1.2px 1.6px;font-size:6.62px;line-height:7.4px">Using this elegant style, create a<br>portrait of a swan wearing a pearl<br>tiara and lace collar, maintaining the<br>same refined quality and soft color<div class="a" style="right:0;top:0;width:10px;height:26px;background:#2f4f2f"></div><svg class="a" style="right:1.5px;top:3px" width="7" height="20" viewBox="0 0 7 20"><path d="M3.5 1 L6.3 5 H.7 Z M3.5 19 L6.3 15 H.7 Z" fill="#6f8a6f"/><path d="M1.5 10 H5.5" stroke="#6f8a6f" stroke-width=".8"/></svg></div>
</div>
<div class="bdg" style="left:255.2px;top:580.3px;">0.00s - vram 0 B</div>
<div class="nd" style="left:255.2px;top:592.8px;width:130.6px;height:47.1px;background:#353535;"><div class="th" style="background:#333;border-bottom-color:#2b2b2b"></div><div class="dot" style="background:#666"></div><div class="tt" style="color:#9a9a9a">ReferenceLatent</div>
<svg class="a" style="left:2.5px;top:24.0px" width="7" height="7"><circle cx="3.5" cy="3.5" r="2.5" fill="#ffa931"/></svg>
<div class="sl" style="left:12.5px;top:23.3px;color:#aaa">conditioning</div>
<svg class="a" style="left:2.5px;top:36.0px" width="7" height="7"><circle cx="3.5" cy="3.5" r="1.85" fill="none" stroke="#ff9cf9" stroke-width="1.7"/></svg>
<div class="sl" style="left:12.5px;top:35.3px;color:#aaa">latent</div>
<svg class="a" style="right:2.0px;top:24.0px" width="7" height="7"><circle cx="3.5" cy="3.5" r="2.5" fill="#ffa931"/></svg>
<div class="sl" style="right:11.8px;top:23.3px;color:#aaa">CONDITIONING</div>
</div>
<div class="bdg" style="left:408.3px;top:583.3px;">0.00s - vram 0 B</div>
<div class="nd" style="left:407.7px;top:595px;width:148.3px;height:54.3px;background:#353535;"><div class="th" style="background:#333;border-bottom-color:#2b2b2b"></div><div class="dot" style="background:#666"></div><div class="tt" style="color:#9a9a9a">Flux引导</div>
<svg class="a" style="left:2.5px;top:23.8px" width="7" height="7"><circle cx="3.5" cy="3.5" r="2.5" fill="#ffa931"/></svg>
<div class="sl" style="left:12.5px;top:23.1px;color:#aaa">条件</div>
<svg class="a" style="right:2.0px;top:23.8px" width="7" height="7"><circle cx="3.5" cy="3.5" r="2.5" fill="#ffa931"/></svg>
<div class="sl" style="right:11.8px;top:23.1px;color:#aaa">条件</div>
<div class="wg" style="left:9px;right:9px;top:34.8px"><svg class="al" width="7" height="7.6" viewBox="0 0 7 7.6"><path d="M6.6 .2 V7.4 L.2 3.8 Z"/></svg><span class="l">引导</span><span class="v" style="right:21px">2.5</span><svg class="ar" width="7" height="7.6" viewBox="0 0 7 7.6"><path d="M.4 .2 V7.4 L6.8 3.8 Z"/></svg></div>
</div>
<div class="nd" style="left:442.3px;top:677.3px;width:131px;height:36.7px;background:#353535;"><div class="th" style="background:#333;border-bottom-color:#2b2b2b"></div><div class="dot" style="background:#666"></div><div class="tt" style="color:#9a9a9a">条件零化</div>
<svg class="a" style="left:2.5px;top:23.9px" width="7" height="7"><circle cx="3.5" cy="3.5" r="2.5" fill="#ffa931"/></svg>
<div class="sl" style="left:12.5px;top:23.2px;color:#aaa">条件</div>
<svg class="a" style="right:2.0px;top:23.9px" width="7" height="7"><circle cx="3.5" cy="3.5" r="2.5" fill="#ffa931"/></svg>
<div class="sl" style="right:11.8px;top:23.2px;color:#aaa">条件</div>
</div>
<div class="bdg" style="left:296.3px;top:730px;">0.00s - vram 0 B</div>
<div class="nd" style="left:296.2px;top:742.7px;width:137.8px;height:64.8px;background:#353535;"><div class="th" style="background:#333;border-bottom-color:#2b2b2b"></div><div class="dot" style="background:#666"></div><div class="tt" style="color:#9a9a9a">复制Latent批次</div>
<svg class="a" style="left:2.5px;top:23.8px" width="7" height="7"><circle cx="3.5" cy="3.5" r="2.5" fill="#ff9cf9"/></svg>
<div class="sl" style="left:12.5px;top:23.1px;color:#aaa">Latent</div>
<svg class="a" style="right:2.0px;top:23.8px" width="7" height="7"><circle cx="3.5" cy="3.5" r="2.5" fill="#ff9cf9"/></svg>
<div class="sl" style="right:11.8px;top:23.1px;color:#aaa">Latent</div>
<div class="wg" style="left:9px;right:9px;top:34.3px"><svg class="al dim" width="7" height="7.6" viewBox="0 0 7 7.6"><path d="M6.6 .2 V7.4 L.2 3.8 Z"/></svg><span class="l">数量</span><span class="v" style="right:21px">1</span><svg class="ar" width="7" height="7.6" viewBox="0 0 7 7.6"><path d="M.4 .2 V7.4 L6.8 3.8 Z"/></svg></div>
</div>
<div class="bdg" style="left:84px;top:689px;">0.14s - vram 1.24 GB</div>
<div class="nd" style="left:84px;top:701.1px;width:148.6px;height:48.9px;background:#353535;"><div class="th" style="background:#333;border-bottom-color:#2b2b2b"></div><div class="dot" style="background:#666"></div><div class="tt" style="color:#9a9a9a">VAE编码</div>
<svg class="a" style="left:2.5px;top:23.7px" width="7" height="7"><circle cx="3.5" cy="3.5" r="2.5" fill="#64b5f6"/></svg>
<div class="sl" style="left:12.5px;top:23.0px;color:#aaa">图像</div>
<svg class="a" style="left:2.5px;top:36.1px" width="7" height="7"><circle cx="3.5" cy="3.5" r="2.5" fill="#ff6e6e"/></svg>
<div class="sl" style="left:12.5px;top:35.4px;color:#aaa">VAE</div>
<svg class="a" style="right:2.0px;top:23.7px" width="7" height="7"><circle cx="3.5" cy="3.5" r="2.5" fill="#ff9cf9"/></svg>
<div class="sl" style="right:11.8px;top:23.0px;color:#aaa">Latent</div>
</div>
<div class="bdg" style="left:633px;top:587.4px;">0.20s - vram 2.11 GB</div>
<div class="nd" style="left:633px;top:600px;width:117.3px;height:46.8px;background:#353535;"><div class="th" style="background:#333;border-bottom-color:#2b2b2b"></div><div class="dot" style="background:#666"></div><div class="tt" style="color:#9a9a9a">VAE解码</div>
<svg class="a" style="left:2.5px;top:23.7px" width="7" height="7"><circle cx="3.5" cy="3.5" r="2.5" fill="#ff9cf9"/></svg>
<div class="sl" style="left:12.5px;top:23.0px;color:#aaa">Latent</div>
<svg class="a" style="left:2.5px;top:36.5px" width="7" height="7"><circle cx="3.5" cy="3.5" r="2.5" fill="#ff6e6e"/></svg>
<div class="sl" style="left:12.5px;top:35.8px;color:#aaa">VAE</div>
<svg class="a" style="right:2.0px;top:23.7px" width="7" height="7"><circle cx="3.5" cy="3.5" r="2.5" fill="#64b5f6"/></svg>
<div class="sl" style="right:11.8px;top:23.0px;color:#aaa">图像</div>
</div>
<div class="bdg" style="left:560.7px;top:654.5px;">25.81s - vram 1.16 GB</div>
<div class="nd" style="left:559.6px;top:667.7px;width:203.5px;height:202.6px;background:#353535;"><div class="th" style="background:#333;border-bottom-color:#2b2b2b"></div><div class="dot" style="background:#666"></div><div class="tt" style="color:#9a9a9a">K采样器</div>
<svg class="a" style="left:2.5px;top:24.0px" width="7" height="7"><circle cx="3.5" cy="3.5" r="2.5" fill="#b39ddb"/></svg>
<div class="sl" style="left:12.5px;top:23.3px;color:#aaa">模型</div>
<svg class="a" style="left:2.5px;top:36.8px" width="7" height="7"><circle cx="3.5" cy="3.5" r="2.5" fill="#ffa931"/></svg>
<div class="sl" style="left:12.5px;top:36.1px;color:#aaa">正面条件</div>
<svg class="a" style="left:2.5px;top:49.1px" width="7" height="7"><circle cx="3.5" cy="3.5" r="2.5" fill="#ffa931"/></svg>
<div class="sl" style="left:12.5px;top:48.4px;color:#aaa">负面条件</div>
<svg class="a" style="left:2.5px;top:61.2px" width="7" height="7"><circle cx="3.5" cy="3.5" r="2.5" fill="#ff9cf9"/></svg>
<div class="sl" style="left:12.5px;top:60.5px;color:#aaa">Latent</div>
<svg class="a" style="right:2.0px;top:24.0px" width="7" height="7"><circle cx="3.5" cy="3.5" r="2.5" fill="#ff9cf9"/></svg>
<div class="sl" style="right:11.8px;top:23.3px;color:#aaa">Latent</div>
<div class="wg" style="left:9px;right:9px;top:71.6px"><svg class="al" width="7" height="7.6" viewBox="0 0 7 7.6"><path d="M6.6 .2 V7.4 L.2 3.8 Z"/></svg><span class="l">种子</span><span class="v" style="right:21px">828418609138010</span><svg class="ar" width="7" height="7.6" viewBox="0 0 7 7.6"><path d="M.4 .2 V7.4 L6.8 3.8 Z"/></svg></div>
<div class="wg" style="left:9px;right:9px;top:86.4px"><svg class="al" width="7" height="7.6" viewBox="0 0 7 7.6"><path d="M6.6 .2 V7.4 L.2 3.8 Z"/></svg><span class="l">生成后控制</span><span class="v" style="right:21px">randomize</span><svg class="ar dim" width="7" height="7.6" viewBox="0 0 7 7.6"><path d="M.4 .2 V7.4 L6.8 3.8 Z"/></svg></div>
<div class="wg" style="left:9px;right:9px;top:101.3px"><svg class="al" width="7" height="7.6" viewBox="0 0 7 7.6"><path d="M6.6 .2 V7.4 L.2 3.8 Z"/></svg><span class="l">步数</span><span class="v" style="right:21px">20</span><svg class="ar" width="7" height="7.6" viewBox="0 0 7 7.6"><path d="M.4 .2 V7.4 L6.8 3.8 Z"/></svg></div>
<div class="wg" style="left:9px;right:9px;top:116.1px"><svg class="al" width="7" height="7.6" viewBox="0 0 7 7.6"><path d="M6.6 .2 V7.4 L.2 3.8 Z"/></svg><span class="l">cfg</span><span class="v" style="right:21px">1.0</span><svg class="ar" width="7" height="7.6" viewBox="0 0 7 7.6"><path d="M.4 .2 V7.4 L6.8 3.8 Z"/></svg></div>
<div class="wg" style="left:9px;right:9px;top:131.3px"><svg class="al dim" width="7" height="7.6" viewBox="0 0 7 7.6"><path d="M6.6 .2 V7.4 L.2 3.8 Z"/></svg><span class="l">采样器名称</span><span class="v" style="right:21px">euler</span><svg class="ar" width="7" height="7.6" viewBox="0 0 7 7.6"><path d="M.4 .2 V7.4 L6.8 3.8 Z"/></svg></div>
<div class="wg" style="left:9px;right:9px;top:146.4px"><svg class="al dim" width="7" height="7.6" viewBox="0 0 7 7.6"><path d="M6.6 .2 V7.4 L.2 3.8 Z"/></svg><span class="l">调度器</span><span class="v" style="right:21px">simple</span><svg class="ar" width="7" height="7.6" viewBox="0 0 7 7.6"><path d="M.4 .2 V7.4 L6.8 3.8 Z"/></svg></div>
<div class="wg" style="left:9px;right:9px;top:160.9px"><svg class="al" width="7" height="7.6" viewBox="0 0 7 7.6"><path d="M6.6 .2 V7.4 L.2 3.8 Z"/></svg><span class="l">降噪</span><span class="v" style="right:21px">1.00</span><svg class="ar dim" width="7" height="7.6" viewBox="0 0 7 7.6"><path d="M.4 .2 V7.4 L6.8 3.8 Z"/></svg></div>
</div>
<div class="nd" style="left:56.7px;top:836px;width:209px;height:72.7px;background:#353535;"><div class="th" style="background:#333;border-bottom-color:#2b2b2b"></div><div class="dot" style="background:#666"></div><div class="tt" style="color:#9a9a9a">LoRA加载器（仅模型）</div>
<svg class="a" style="left:2.5px;top:23.5px" width="7" height="7"><circle cx="3.5" cy="3.5" r="2.5" fill="#b39ddb"/></svg>
<div class="sl" style="left:12.5px;top:22.8px;color:#aaa">模型</div>
<svg class="a" style="right:2.0px;top:23.5px" width="7" height="7"><circle cx="3.5" cy="3.5" r="2.5" fill="#b39ddb"/></svg>
<div class="sl" style="right:11.8px;top:22.8px;color:#aaa">模型</div>
<div class="wg" style="left:9px;right:9px;top:34.1px"><svg class="al" width="7" height="7.6" viewBox="0 0 7 7.6"><path d="M6.6 .2 V7.4 L.2 3.8 Z"/></svg><span class="l" style="color:#e2e2e2">Kontext/社区/溶图/Fix-Light-Kontext补光.safet...</span><svg class="ar" width="7" height="7.6" viewBox="0 0 7 7.6"><path d="M.4 .2 V7.4 L6.8 3.8 Z"/></svg></div>
<div class="wg" style="left:9px;right:9px;top:48.8px"><svg class="al" width="7" height="7.6" viewBox="0 0 7 7.6"><path d="M6.6 .2 V7.4 L.2 3.8 Z"/></svg><span class="l">模型强度</span><span class="v" style="right:21px">1.00</span><svg class="ar" width="7" height="7.6" viewBox="0 0 7 7.6"><path d="M.4 .2 V7.4 L6.8 3.8 Z"/></svg></div>
</div>
<svg class="a" style="left:811px;top:866px" width="44" height="36" viewBox="0 0 44 36"><g fill="#9a9a9a"><path d="M15 0.5 C6.8 0.5 0.5 6 0.5 12.8 c0 3.9 2.1 7.3 5.4 9.5 L4.6 26.6 l4.9-2.6 c1.7.5 3.5.8 5.5.8 .5 0 1 0 1.5-.1 -.4-1.100 -.6-2.300 -.6-3.500 0-6.3 6-11.300 13.300-11.300 .3 0 .6 0 .9 0 C28.600 4.500 22.400.5 15 .5 Z"/><path d="M42.800 21.400 c0-5.700-5.500-10.300-12.200-10.300 s-12.200 4.600-12.200 10.300 5.500 10.300 12.200 10.300 c1.500 0 2.900-.2 4.200-.6 l3.900 2.200 -1.100-3.600 c3.100-1.900 5.200-4.900 5.200-8.300 Z"/></g><g fill="#202020"><circle cx="10" cy="9" r="1.7"/><circle cx="19.500" cy="9" r="1.7"/><circle cx="26.500" cy="18.500" r="1.500"/><circle cx="34.500" cy="18.500" r="1.500"/></g></svg>
<div class="a" style="left:861px;top:864px;font-size:29.4px;line-height:38px;color:#9a9a9a;white-space:nowrap;letter-spacing:.2px;word-spacing:4.5px;font-weight:500">公众号 · 破狼</div>
</div></body></html>
